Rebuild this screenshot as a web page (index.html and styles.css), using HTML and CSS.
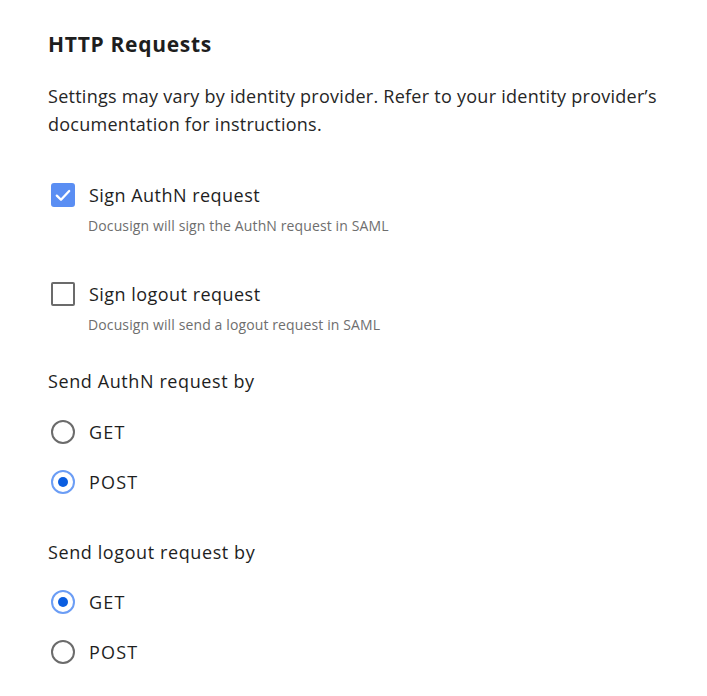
FILE: index.html
```html
<!DOCTYPE html>
<html>
<head>
<meta charset="utf-8">
<link rel="stylesheet" href="styles.css">
</head>
<body>
<div class="panel">
  <h2 class="title">HTTP Requests</h2>
  <p class="desc">Settings may vary by identity provider. Refer to your identity provider’s documentation for instructions.</p>

  <div class="check-item">
    <div class="row">
      <span class="box checked">
        <svg viewBox="0 0 24 24" width="24" height="24"><path d="M5.8 12.6l4.2 4.2 8.2-8.8" fill="none" stroke="#fff" stroke-width="2.3" stroke-linecap="round" stroke-linejoin="round"/></svg>
      </span>
      <span class="label">Sign AuthN request</span>
    </div>
    <div class="help">Docusign will sign the AuthN request in SAML</div>
  </div>

  <div class="check-item second">
    <div class="row">
      <span class="box"></span>
      <span class="label">Sign logout request</span>
    </div>
    <div class="help">Docusign will send a logout request in SAML</div>
  </div>

  <div class="group first-group">
    <div class="group-title">Send AuthN request by</div>
    <div class="row radio-row"><span class="radio"></span><span class="label">GET</span></div>
    <div class="row radio-row"><span class="radio on"></span><span class="label">POST</span></div>
  </div>

  <div class="group">
    <div class="group-title">Send logout request by</div>
    <div class="row radio-row"><span class="radio on"></span><span class="label">GET</span></div>
    <div class="row radio-row"><span class="radio"></span><span class="label">POST</span></div>
  </div>
</div>
</body>
</html>
```

FILE: styles.css
```css
html, body {
  margin: 0;
  padding: 0;
  background: #ffffff;
}
body {
  font-family: "Open Sans", "Lato", sans-serif;
  color: #1e1e1e;
}
.panel {
  padding: 28px 30px 0 48px;
}
.title {
  margin: 0;
  font-size: 21px;
  line-height: 32px;
  font-weight: 700;
  letter-spacing: 0.7px;
  color: #1e1e1e;
}
.desc {
  margin: 22px 0 0 0;
  font-size: 18px;
  line-height: 28px;
  letter-spacing: 0.26px;
  color: #262626;
  max-width: 640px;
}
.check-item {
  margin-top: 43px;
}
.check-item.second {
  margin-top: 44px;
}
.row {
  display: flex;
  align-items: center;
  gap: 14px;
  height: 28px;
}
.box {
  width: 24px;
  height: 24px;
  box-sizing: border-box;
  border: 2px solid #6b6b6b;
  border-radius: 2px;
  display: inline-flex;
  align-items: center;
  justify-content: center;
  margin-left: 3px;
}
.box.checked {
  background: #5a8ef3;
  border-color: #5a8ef3;
  border-radius: 3px;
}
.box svg {
  display: block;
  flex: none;
}
.label {
  font-size: 18px;
  line-height: 28px;
  letter-spacing: 0.47px;
  color: #1e1e1e;
}
.radio-row .label {
  letter-spacing: 1.2px;
}
.help {
  margin-left: 40px;
  margin-top: 7px;
  font-size: 14px;
  line-height: 20px;
  letter-spacing: 0.12px;
  color: #6e6e6e;
}
.group {
  margin-top: 31px;
}
.group.first-group {
  margin-top: 32px;
}
.group-title {
  font-size: 18px;
  line-height: 28px;
  letter-spacing: 0.6px;
  color: #1e1e1e;
  margin-bottom: 11px;
}
.first-group .group-title {
  margin-bottom: 12px;
}
.radio-row {
  height: 50px;
}
.radio {
  width: 24px;
  height: 24px;
  box-sizing: border-box;
  border: 2px solid #6b6b6b;
  border-radius: 50%;
  margin-left: 3px;
  display: inline-flex;
  align-items: center;
  justify-content: center;
}
.radio.on {
  border-color: #6b9df5;
}
.radio.on::after {
  content: "";
  width: 10px;
  height: 10px;
  border-radius: 50%;
  background: #0b5ee0;
}
```
